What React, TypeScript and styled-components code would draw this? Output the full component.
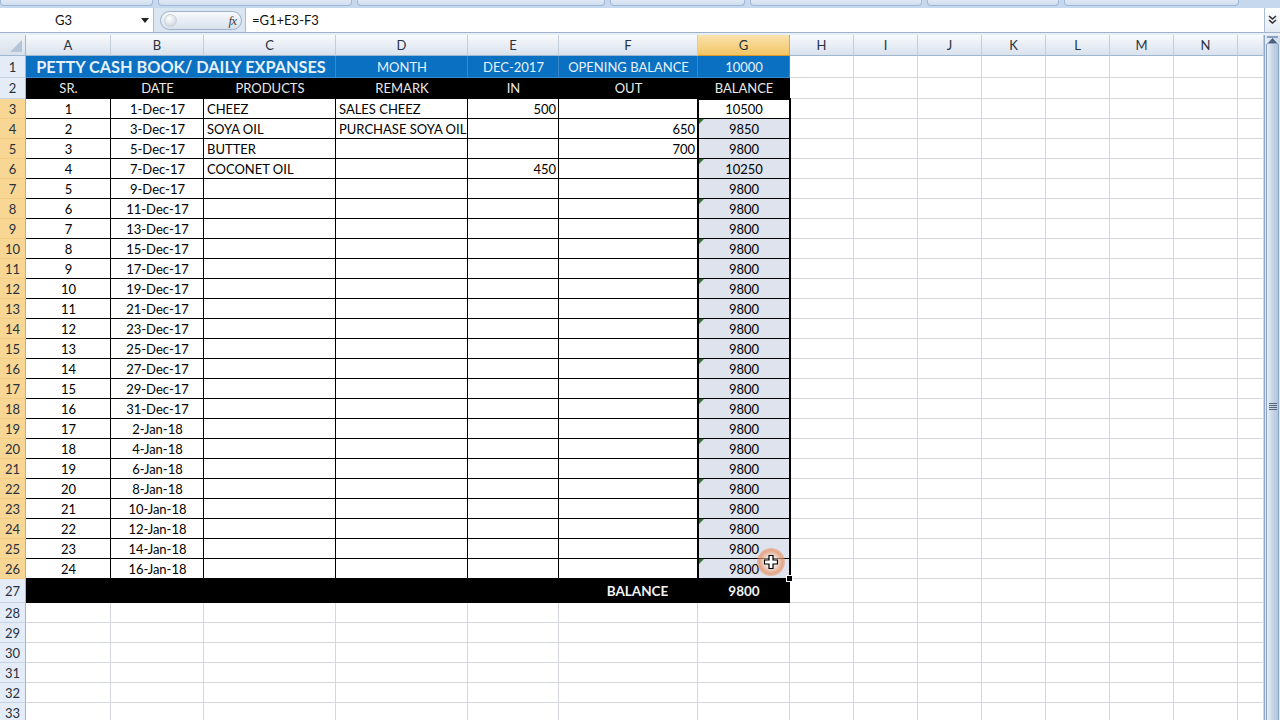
import React from 'react';
import styled, { createGlobalStyle, css } from 'styled-components';

const GlobalStyle = createGlobalStyle`
  html, body { margin: 0; padding: 0; background: #fff; overflow: hidden; }
  body { font-family: Lato, "Liberation Sans", sans-serif; }
`;

const BLUE = '#0a70c2';
const GRID = '#d3d7dd';

const colWidths = [85, 93, 132, 132, 91, 139, 92, 64, 64, 64, 64, 64, 64, 64, 26];
const letters = ['A', 'B', 'C', 'D', 'E', 'F', 'G', 'H', 'I', 'J', 'K', 'L', 'M', 'N', ''];
const ribbonGroups = [153, 194, 248, 135, 172, 132, 175];

const entries = [
  { product: 'CHEEZ', remark: 'SALES CHEEZ', inn: '500', out: '', bal: '10500' },
  { product: 'SOYA OIL', remark: 'PURCHASE SOYA OIL', inn: '', out: '650', bal: '9850' },
  { product: 'BUTTER', remark: '', inn: '', out: '700', bal: '9800' },
  { product: 'COCONET OIL', remark: '', inn: '450', out: '', bal: '10250' },
];

const dates = [
  ...Array.from({ length: 16 }, (_, i) => `${i * 2 + 1}-Dec-17`),
  ...Array.from({ length: 8 }, (_, i) => `${(i + 1) * 2}-Jan-18`),
];

const Page = styled.div`
  width: 1280px;
  height: 720px;
  display: flex;
  flex-direction: column;
  overflow: hidden;
  position: relative;
  background: #fff;
`;

const RibbonEdge = styled.div`
  height: 8px;
  display: flex;
  gap: 5px;
  background: #c5d8ee;
`;

const RibbonGroup = styled.div<{ $w: number }>`
  width: ${p => p.$w}px;
  height: 6px;
  box-sizing: border-box;
  background: linear-gradient(#dfe9f5, #cfdeef);
  border: 1px solid #9fb8d8;
  border-top: none;
  border-radius: 0 0 4px 4px;
`;

const FormulaBar = styled.div`
  height: 24px;
  display: flex;
  align-items: stretch;
  background: #dbe6f3;
  border-bottom: 1px solid #9fb2c9;
  font-size: 13px;
  color: #111;
`;

const NameBox = styled.div`
  width: 154px;
  box-sizing: border-box;
  background: #fff;
  border-right: 1px solid #a9bcd4;
  display: flex;
  align-items: center;
  padding: 0 4px 0 0;
  span { flex: 1; text-align: center; padding-right: 14px; }
`;

const FxPill = styled.div`
  margin: 3px 3px 2px 6px;
  width: 82px;
  box-sizing: border-box;
  border: 1px solid #9fb1c7;
  border-radius: 10px;
  background: linear-gradient(#f7f9fc, #d8e1ec);
  display: flex;
  align-items: center;
  justify-content: space-between;
  padding: 0 5px 0 3px;
`;

const Knob = styled.div`
  width: 11px;
  height: 11px;
  border-radius: 50%;
  background: radial-gradient(circle at 40% 35%, #ffffff, #c4ccd6);
  border: 1px solid #c9d1db;
`;

const Fx = styled.span`
  font-family: "Liberation Serif", serif;
  font-style: italic;
  font-size: 13px;
  color: #444;
  letter-spacing: -1px;
`;

const FormulaInput = styled.div`
  flex: 1;
  background: #fff;
  border-left: 1px solid #a9bcd4;
  display: flex;
  align-items: center;
  padding-left: 6px;
`;

const ExpandButton = styled.div`
  width: 15px;
  background: linear-gradient(#ffffff, #e3eaf3);
  border-left: 1px solid #a9bcd4;
  display: flex;
  align-items: center;
  justify-content: center;
`;

const Gap = styled.div`
  height: 2px;
  background: #e8eef6;
`;

const SheetArea = styled.div`
  flex: 1;
  display: flex;
  min-height: 0;
`;

const GridWrap = styled.div`
  position: relative;
  width: 1264px;
  overflow: hidden;
`;

const Grid = styled.div`
  display: grid;
  grid-template-columns: 26px ${colWidths.map(w => `${w}px`).join(' ')};
  grid-template-rows: 21px 22px 21px repeat(24, 20px) 24px repeat(6, 20px);
  font-size: 13px;
`;

const Corner = styled.div`
  box-sizing: border-box;
  background: linear-gradient(#eef2f8, #d9e1ec);
  border-right: 1px solid #9eb6ce;
  border-bottom: 1px solid #9eb6ce;
  position: relative;
  &::after {
    content: '';
    position: absolute;
    right: 3px;
    bottom: 3px;
    border-left: 12px solid transparent;
    border-bottom: 12px solid #b5c4d6;
  }
`;

const ColHead = styled.div<{ $selected?: boolean }>`
  box-sizing: border-box;
  display: flex;
  align-items: center;
  justify-content: center;
  color: #27313f;
  border-right: 1px solid ${p => (p.$selected ? '#e2a73f' : '#c3cedc')};
  border-bottom: 1px solid ${p => (p.$selected ? '#d99a2b' : '#9eb6ce')};
  background: ${p =>
    p.$selected ? 'linear-gradient(#fae3ae, #f2c564)' : 'linear-gradient(#f8fafd, #dae2ed)'};
`;

const RowHead = styled.div<{ $selected?: boolean }>`
  box-sizing: border-box;
  display: flex;
  align-items: center;
  justify-content: center;
  color: #27313f;
  border-right: 1px solid ${p => (p.$selected ? '#e0a84a' : '#9eb6ce')};
  border-bottom: 1px solid ${p => (p.$selected ? '#f3cb83' : '#c6d4e5')};
  background: ${p => (p.$selected ? '#f8d694' : '#e4ecf7')};
`;

type CellProps = {
  $span?: number;
  $bg?: string;
  $color?: string;
  $line?: string;
  $align?: 'left' | 'center' | 'right';
  $bold?: boolean;
  $size?: number;
  $flag?: boolean;
  $shift?: number;
};

const Cell = styled.div<CellProps>`
  grid-column: span ${p => p.$span ?? 1};
  box-sizing: border-box;
  position: relative;
  display: flex;
  align-items: center;
  justify-content: ${p =>
    p.$align === 'center' ? 'center' : p.$align === 'right' ? 'flex-end' : 'flex-start'};
  padding: 0 2px 0 ${p => 3 + (p.$shift ?? 0)}px;
  white-space: nowrap;
  background: ${p => p.$bg ?? '#fff'};
  color: ${p => p.$color ?? '#000'};
  font-size: ${p => p.$size ?? 13}px;
  font-weight: ${p => (p.$bold ? 700 : 400)};
  border-right: 1px solid ${p => p.$line ?? GRID};
  border-bottom: 1px solid ${p => p.$line ?? GRID};
  ${p =>
    p.$flag &&
    css`
      &::before {
        content: '';
        position: absolute;
        left: 1px;
        top: 0;
        border-top: 5px solid #2d7a2d;
        border-right: 5px solid transparent;
      }
    `}
`;

const Selection = styled.div`
  position: absolute;
  left: 697px;
  top: 63px;
  width: 94px;
  height: 482px;
  box-sizing: border-box;
  border: 2px solid #000;
  pointer-events: none;
`;

const FillHandle = styled.div`
  position: absolute;
  right: -4px;
  bottom: -4px;
  width: 5px;
  height: 5px;
  background: #000;
  border: 1px solid #fff;
`;

const Pointer = styled.div`
  position: absolute;
  left: 757px;
  top: 548px;
  width: 28px;
  height: 28px;
  border-radius: 50%;
  background: radial-gradient(circle, rgba(250, 225, 205, 0.5) 30%, rgba(232, 140, 90, 0.7) 58%, rgba(236, 160, 110, 0.3) 80%, rgba(236, 160, 110, 0) 100%);
  display: flex;
  align-items: center;
  justify-content: center;
`;

const ScrollBar = styled.div`
  width: 16px;
  display: flex;
  flex-direction: column;
  background: #dfe7f2;
  border-left: 1px solid #8fa7c8;
  box-sizing: border-box;
  overflow: hidden;
`;

const SplitBox = styled.div`
  height: 6px;
  margin: 1px 2px 0;
  border: 1px solid #8aa0bf;
  background: #f2f5f9;
`;

const ArrowButton = styled.div`
  height: 17px;
  display: flex;
  align-items: center;
  justify-content: center;
  background: linear-gradient(90deg, #e6edf6, #cfdbea);
`;

const Thumb = styled.div`
  flex: none;
  height: 720px;
  margin: 0 1px;
  border: 1px solid #8ca3c4;
  border-radius: 2px;
  background: linear-gradient(90deg, #e8eef6, #c2d1e4 60%, #b4c5dc);
  display: flex;
  justify-content: center;
  padding-top: 359px;
  box-sizing: border-box;
`;

const Grip = styled.div`
  width: 8px;
  height: 7px;
  background: repeating-linear-gradient(#55657a 0 1px, transparent 1px 2px);
`;

function Blank({ n }: { n: number }) {
  return (
    <>
      {Array.from({ length: n }, (_, i) => (
        <Cell key={i} />
      ))}
    </>
  );
}

export default function App() {
  const lightText = '#e6f0fb';
  return (
    <Page>
      <GlobalStyle />
      <RibbonEdge>
        {ribbonGroups.map((w, i) => (
          <RibbonGroup key={i} $w={w} />
        ))}
      </RibbonEdge>
      <FormulaBar>
        <NameBox>
          <span>G3</span>
          <svg width="8" height="5" viewBox="0 0 8 5">
            <polygon points="0,0 8,0 4,5" fill="#222" />
          </svg>
        </NameBox>
        <FxPill>
          <Knob />
          <Fx>fx</Fx>
        </FxPill>
        <FormulaInput>=G1+E3-F3</FormulaInput>
        <ExpandButton>
          <svg width="9" height="10" viewBox="0 0 9 10">
            <path d="M1 1 L4.5 4 L8 1 M1 5 L4.5 8 L8 5" stroke="#333" strokeWidth="1.6" fill="none" />
          </svg>
        </ExpandButton>
      </FormulaBar>
      <Gap />
      <SheetArea>
        <GridWrap>
          <Grid>
            <Corner />
            {letters.map((l, i) => (
              <ColHead key={i} $selected={l === 'G'}>
                {l}
              </ColHead>
            ))}

            <RowHead>1</RowHead>
            <Cell $span={3} $bg={BLUE} $line="#3a88cc" $color={lightText} $bold $size={16.3} $align="center">
              PETTY CASH BOOK/ DAILY EXPANSES
            </Cell>
            {['MONTH', 'DEC-2017', 'OPENING BALANCE', '10000'].map(t => (
              <Cell key={t} $bg={BLUE} $line="#3a88cc" $color={lightText} $align="center">
                {t}
              </Cell>
            ))}
            <Blank n={8} />

            <RowHead>2</RowHead>
            {['SR.', 'DATE', 'PRODUCTS', 'REMARK', 'IN', 'OUT', 'BALANCE'].map(t => (
              <Cell key={t} $bg="#000" $line="#000" $color="#e8e8e8" $align="center">
                {t}
              </Cell>
            ))}
            <Blank n={8} />

            {dates.map((d, i) => {
              const e = entries[i];
              const row = i + 3;
              return (
                <React.Fragment key={row}>
                  <RowHead $selected>{row}</RowHead>
                  <Cell $line="#000" $align="center">{i + 1}</Cell>
                  <Cell $line="#000" $align="center">{d}</Cell>
                  <Cell $line="#000">{e?.product}</Cell>
                  <Cell $line="#000">{e?.remark}</Cell>
                  <Cell $line="#000" $align="right">{e?.inn}</Cell>
                  <Cell $line="#000" $align="right">{e?.out}</Cell>
                  <Cell $line="#000" $align="center" $bg={i === 0 ? '#fff' : '#dfe3ee'} $flag={row % 2 === 0}>
                    {e ? e.bal : '9800'}
                  </Cell>
                  <Blank n={8} />
                </React.Fragment>
              );
            })}

            <RowHead>27</RowHead>
            {Array.from({ length: 5 }, (_, i) => (
              <Cell key={i} $bg="#000" $line="#000" />
            ))}
            <Cell $bg="#000" $line="#000" $color="#f2f2f2" $bold $size={13.5} $align="center" $shift={18}>
              BALANCE
            </Cell>
            <Cell $bg="#000" $line="#000" $color="#f2f2f2" $bold $size={13.5} $align="center">
              9800
            </Cell>
            <Blank n={8} />

            {[28, 29, 30, 31, 32, 33].map(r => (
              <React.Fragment key={r}>
                <RowHead>{r}</RowHead>
                <Blank n={15} />
              </React.Fragment>
            ))}
          </Grid>
          <Selection>
            <FillHandle />
          </Selection>
        </GridWrap>
        <ScrollBar>
          <SplitBox />
          <ArrowButton>
            <svg width="9" height="5" viewBox="0 0 9 5">
              <polygon points="0,5 9,5 4.5,0" fill="#4a5f7c" />
            </svg>
          </ArrowButton>
          <Thumb>
            <Grip />
          </Thumb>
        </ScrollBar>
      </SheetArea>
      <Pointer>
        <svg width="14" height="14" viewBox="0 0 14 14">
          <path
            d="M5 0.5 H9 V5 H13.5 V9 H9 V13.5 H5 V9 H0.5 V5 H5 Z"
            fill="#fff"
            stroke="#000"
            strokeWidth="1.2"
          />
        </svg>
      </Pointer>
    </Page>
  );
}
